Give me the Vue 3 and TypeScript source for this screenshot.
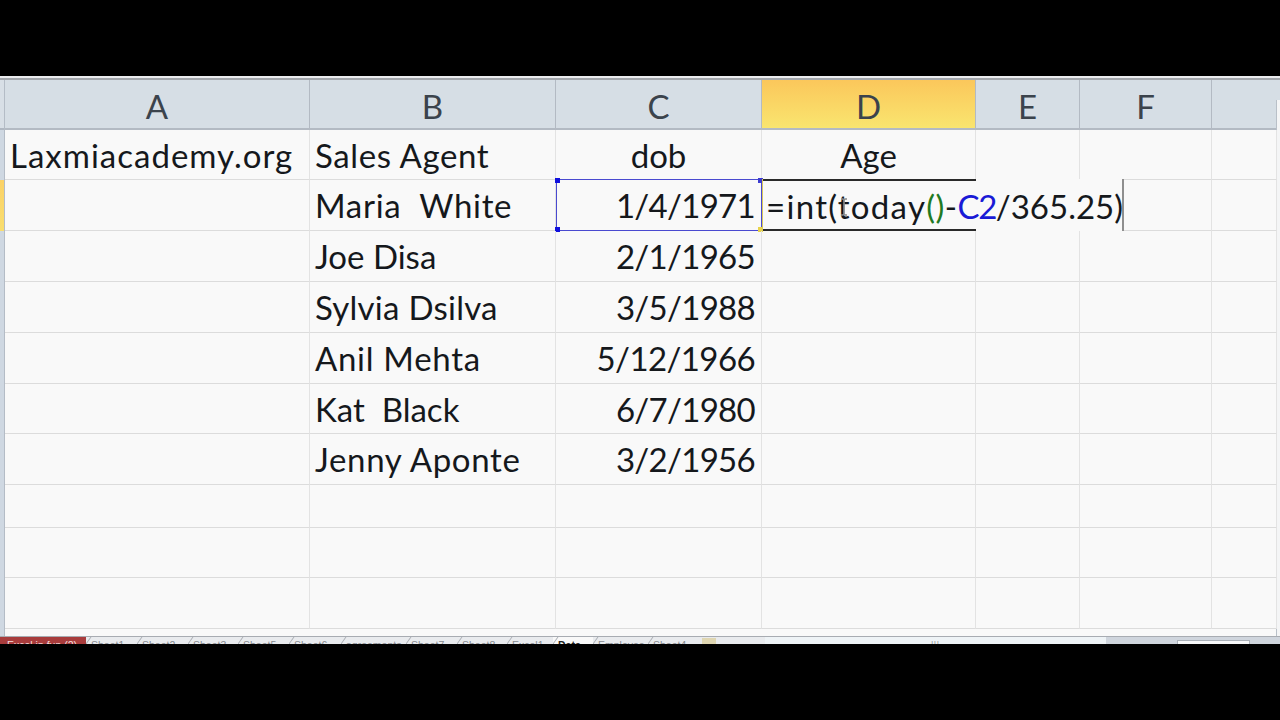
<script setup lang="ts">
interface Cell { text?: string; align?: 'left' | 'right' | 'center'; track?: number }
const columns = [
  { name: 'A', width: 305 },
  { name: 'B', width: 246 },
  { name: 'C', width: 206 },
  { name: 'D', width: 214, active: true },
  { name: 'E', width: 104 },
  { name: 'F', width: 132 },
  { name: '', width: 65 },
]
const gridCols = columns.map((c) => `${c.width}px`).join(' ')
const data: { h: number; cells: Cell[] }[] = [
  { h: 50, cells: [{ text: 'Laxmiacademy.org', track: 1 }, { text: 'Sales Agent', track: 0.6 }, { text: 'dob', align: 'center' }, { text: 'Age', align: 'center' }] },
  { h: 51, cells: [{}, { text: 'Maria  White', track: 0.7 }, { text: '1/4/1971', align: 'right', track: -0.7 }] },
  { h: 51, cells: [{}, { text: 'Joe Disa' }, { text: '2/1/1965', align: 'right', track: -0.7 }] },
  { h: 51, cells: [{}, { text: 'Sylvia Dsilva', track: 0.25 }, { text: '3/5/1988', align: 'right', track: -0.7 }] },
  { h: 51, cells: [{}, { text: 'Anil Mehta', track: 0.7 }, { text: '5/12/1966', align: 'right', track: -0.6 }] },
  { h: 50, cells: [{}, { text: 'Kat  Black' }, { text: '6/7/1980', align: 'right', track: -0.7 }] },
  { h: 51, cells: [{}, { text: 'Jenny Aponte', track: 0.67 }, { text: '3/2/1956', align: 'right', track: -0.7 }] },
  { h: 43, cells: [] },
  { h: 50, cells: [] },
  { h: 51, cells: [] },
]
const rows = data.map((r) => ({
  h: r.h,
  cells: columns.map((_, i) => r.cells[i] ?? {}),
}))
const tabs = [
  { t: 'Sheet1', w: 51 }, { t: 'Sheet2', w: 51 }, { t: 'Sheet3', w: 50 }, { t: 'Sheet5', w: 51 },
  { t: 'Sheet6', w: 52 }, { t: 'agreements', w: 65 }, { t: 'Sheet7', w: 51 }, { t: 'Sheet8', w: 50 },
  { t: 'Excel1', w: 46 },
]
</script>

<template>
  <div class="screen">
    <div class="sheet">
      <div class="edge-line"></div>
      <div class="grid-area">
        <div class="row-heads">
          <div class="corner"></div>
          <div
            v-for="(r, i) in rows"
            :key="i"
            class="row-head"
            :class="{ hot: i === 1 }"
            :style="{ height: r.h + 'px' }"
          ></div>
          <div class="row-head-rest"></div>
        </div>
        <div class="main">
          <div class="col-heads" :style="{ gridTemplateColumns: gridCols }">
            <div v-for="c in columns" :key="c.name" class="col-head" :class="{ hot: c.active }">{{ c.name }}</div>
          </div>
          <div
            v-for="(r, ri) in rows"
            :key="ri"
            class="row"
            :style="{ gridTemplateColumns: gridCols, height: r.h + 'px' }"
          >
            <div
              v-for="(cell, ci) in r.cells"
              :key="ci"
              class="cell"
              :class="cell.align ?? 'left'"
            >
              <span class="txt" :style="{ letterSpacing: (cell.track ?? 0) + 'px' }">{{ cell.text }}</span>
              <template v-if="ri === 1 && ci === 2">
                <div class="sel-box">
                  <i class="h tl"></i><i class="h bl"></i><i class="h tr"></i><i class="h br"></i>
                </div>
              </template>
              <div v-if="ri === 1 && ci === 3" class="editor">
                <span class="fn">=int(today</span><span class="green">()</span><span>-</span><span class="blue">C2</span><span class="rest">/365.25)</span>
                <svg class="ibeam" width="10" height="18" viewBox="0 0 10 18"><path d="M2 1h2l1 1 1-1h2M5 2v14M2 17h2l1-1 1 1h2" fill="none" stroke="#8a8a8a" stroke-width="1.6" /></svg>
              </div>
            </div>
          </div>
          <div class="row-rest"></div>
        </div>
        <div class="vscroll">
          <div class="vs-top"></div>
          <div class="vs-track"></div>
        </div>
      </div>
      <div class="tabbar">
        <div class="tab first">Excel in fun (2)</div>
        <div v-for="t in tabs" :key="t.t" class="tab" :style="{ width: t.w + 'px' }">{{ t.t }}</div>
        <div class="tab current">Data</div>
        <div class="tab" style="width: 55px">Employee</div>
        <div class="tab" style="width: 51px">Sheet4</div>
        <div class="tab-icon"></div>
        <div class="split"></div>
        <div class="hscroll"><span class="grip">|||</span></div>
        <div class="hgutter"><div class="hthumb"></div></div>
      </div>
    </div>
  </div>
</template>

<style>
html, body { margin: 0; background: #000; }
</style>

<style scoped>
.screen {
  width: 1280px;
  height: 720px;
  background: #000;
  padding-top: 76px;
  box-sizing: border-box;
  overflow: hidden;
}
.sheet {
  height: 568px;
  display: flex;
  flex-direction: column;
  background: #f9f9f9;
  overflow: hidden;
}
.edge-line {
  height: 4px;
  box-sizing: border-box;
  background: #ecedef;
  border-bottom: 2px solid #a3a7ac;
  flex: none;
}
.grid-area {
  flex: 1;
  min-height: 0;
  display: flex;
}
.row-heads {
  width: 5px;
  box-sizing: border-box;
  flex: none;
  display: flex;
  flex-direction: column;
  background: #cfd8e2;
  border-right: 1px solid #b4bcc6;
}
.corner { height: 50px; background: #d8dfe6; border-bottom: 2px solid #b0b8c2; box-sizing: border-box; flex: none; }
.row-head { background: #cfd8e2; flex: none; }
.row-head.hot { background: linear-gradient(#fbd267, #f9de6f); }
.row-head-rest { flex: 1; }
.main {
  flex: 1;
  min-width: 0;
  display: flex;
  flex-direction: column;
  font-family: Lato, "Liberation Sans", sans-serif;
}
.col-heads {
  display: grid;
  height: 50px;
  flex: none;
}
.col-head {
  background: #d6dee5;
  border-bottom: 2px solid #b3bac3;
  border-right: 1px solid #b3bac3;
  box-sizing: border-box;
  display: flex;
  align-items: center;
  justify-content: center;
  padding-top: 4px;
  font-size: 33px;
  color: #3b434c;
}
.col-head.hot {
  background: linear-gradient(#fbc75b, #f9e56f);
}
.row {
  display: grid;
  flex: none;
  box-sizing: border-box;
}
.cell {
  position: relative;
  box-sizing: border-box;
  border-right: 1px solid #e3e3e3;
  border-bottom: 1px solid #dcdcdc;
  display: flex;
  align-items: center;
  font-size: 33px;
  color: #15181c;
  white-space: pre;
  padding: 0 6px 0 5px;
}
.cell.right { justify-content: flex-end; }
.cell.center { justify-content: center; padding-right: 5px; }
.row-rest { flex: 1; display: grid; }
.sel-box {
  position: absolute;
  left: 0;
  top: -1px;
  right: -1px;
  bottom: -1px;
  border: 1px solid #4a4ad0;
  pointer-events: none;
}
.h {
  position: absolute;
  width: 5px;
  height: 5px;
  background: #1111dd;
}
.h.tl { left: -2px; top: -2px; }
.h.bl { left: -2px; bottom: -2px; }
.h.tr { right: -2px; top: -2px; background: #3b3bd0; }
.h.br { right: -2px; bottom: -2px; background: #e8d34a; }
.editor {
  position: absolute;
  left: 0;
  top: -1px;
  bottom: -1px;
  width: 362px;
  box-sizing: border-box;
  display: flex;
  align-items: center;
  padding: 1px 0 0 3px;
  background: #f9f9f9;
  border-left: 1px solid #d9c95a;
  border-right: 2px solid #8f8f8f;
  z-index: 2;
  font-size: 33px;
  letter-spacing: 0.5px;
  color: #15181c;
}
.editor::before,
.editor::after {
  content: "";
  position: absolute;
  left: 0;
  width: 213px;
  height: 2px;
  background: #2a2a2a;
}
.editor::before { top: 0; }
.editor::after { bottom: 0; }
.fn { letter-spacing: 1.3px; }
.rest { letter-spacing: 0; }
.green { color: #1f7a22; }
.blue { color: #1a1ad6; letter-spacing: -1.5px; }
.ibeam { position: absolute; left: 76px; top: 19px; }
.vscroll {
  width: 4px;
  flex: none;
  display: flex;
  flex-direction: column;
  background: #d6dee5;
}
.vs-top { height: 20px; background: #d6dee5; flex: none; }
.vs-track { flex: 1; background: #f4f5f6; border-left: 1px solid #b9c0c8; }
.tabbar {
  height: 7px;
  box-sizing: content-box;
  flex: none;
  display: flex;
  background: #e9ebee;
  border-top: 1px solid #a8acb2;
  overflow: hidden;
  font-family: "Liberation Sans", sans-serif;
  font-size: 10.5px;
  line-height: 12px;
  color: #85898f;
}
.tab {
  flex: none;
  position: relative;
  padding: 2px 0 0 5px;
  box-sizing: border-box;
  white-space: nowrap;
  overflow: hidden;
}
.tab::before {
  content: "";
  position: absolute;
  left: 2px;
  top: 0;
  bottom: 0;
  width: 1px;
  background: #a8acb2;
  transform: skewX(-35deg);
}
.tab.first {
  width: 86px;
  background: #a83c3c;
  color: #f5dede;
  padding-left: 7px;
}
.tab.first::before { display: none; }
.tab.current {
  width: 40px;
  background: #f9f9f9;
  color: #222;
  font-weight: 700;
  padding-left: 5px;
}
.tab-icon {
  width: 14px;
  margin: 1px 21px 0 3px;
  flex: none;
  background: #d9c88a;
  opacity: 0.6;
}
.split { width: 28px; flex: none; }
.hscroll {
  width: 341px;
  flex: none;
  background: #eef3f6;
  text-align: center;
  line-height: 14px;
  font-size: 7px;
  color: #777;
}
.grip { letter-spacing: 1px; }
.hgutter {
  flex: 1;
  background: #cfd5dd;
  padding-left: 71px;
}
.hthumb {
  width: 73px;
  height: 8px;
  margin-top: 3px;
  background: #f7f8f9;
  border: 1px solid #aab0b8;
  box-sizing: border-box;
}
</style>
